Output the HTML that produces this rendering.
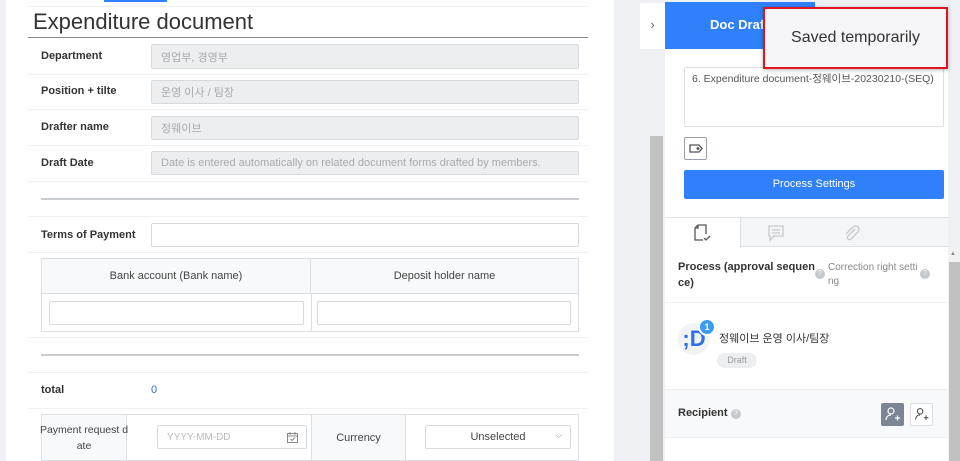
<!DOCTYPE html>
<html><head><meta charset="utf-8"><style>
*{margin:0;padding:0;box-sizing:border-box}
body{width:960px;height:461px;overflow:hidden;position:relative;background:#eef0f3;font-family:"Liberation Sans","Noto Sans CJK KR",sans-serif;color:#333}
.a{position:absolute}
.lbl{position:absolute;left:41px;font-size:11px;font-weight:bold;color:#333}
.inp{position:absolute;border:1px solid #d6d9dd;border-radius:2px;background:#fff;font-size:11px;color:#999;padding-left:9px;display:flex;align-items:center}
.dis{background:#eceef0}
.sep{position:absolute;left:28px;width:560px;height:1px;background:#f0f1f3}
.thick{position:absolute;left:41px;width:538px;height:2px;background:#c9ccd0}
.cell{position:absolute;font-size:11px;color:#444;display:flex;align-items:center;justify-content:center;text-align:center;line-height:16px;white-space:nowrap}
</style></head><body>
<div class="a" style="left:6px;top:0;width:608px;height:461px;background:#fff"></div>
<div class="a" style="left:104px;top:0;width:63px;height:2px;background:#2f80fa"></div>
<div class="a" style="left:28px;top:6px;width:560px;height:1px;background:#f0f1f3"></div>
<div class="a" style="left:33px;top:9px;font-size:22px;color:#333">Expenditure document</div>
<div class="a" style="left:28px;top:37px;width:560px;height:1px;background:#888"></div>

<div class="lbl" style="top:50px">Department</div>
<div class="inp dis" style="left:151px;top:44px;width:428px;height:25px;color:#aaa">영업부, 경영부</div>
<div class="sep" style="top:74px"></div>
<div class="lbl" style="top:85px">Position + tilte</div>
<div class="inp dis" style="left:151px;top:80px;width:428px;height:24px;color:#aaa">운영 이사 / 팀장</div>
<div class="sep" style="top:109px"></div>
<div class="lbl" style="top:121px">Drafter name</div>
<div class="inp dis" style="left:151px;top:116px;width:428px;height:24px;color:#aaa">정웨이브</div>
<div class="sep" style="top:145px"></div>
<div class="lbl" style="top:157px">Draft Date</div>
<div class="inp dis" style="left:151px;top:151px;width:428px;height:24px;color:#aaa">Date is entered automatically on related document forms drafted by members.</div>
<div class="sep" style="top:181px"></div>
<div class="thick" style="top:198px"></div>
<div class="sep" style="top:216px"></div>
<div class="lbl" style="top:229px">Terms of Payment</div>
<div class="inp" style="left:151px;top:223px;width:428px;height:24px"></div>
<div class="sep" style="top:252px"></div>

<div class="a" style="left:41px;top:258px;width:538px;height:74px;border:1px solid #dcdfe3"></div>
<div class="cell" style="left:42px;top:259px;width:269px;height:35px;background:#f8f9fa;border-right:1px solid #dcdfe3;border-bottom:1px solid #dcdfe3">Bank account (Bank name)</div>
<div class="cell" style="left:311px;top:259px;width:267px;height:35px;background:#f8f9fa;border-bottom:1px solid #dcdfe3">Deposit holder name</div>
<div class="a" style="left:311px;top:294px;width:1px;height:37px;background:#dcdfe3"></div>
<div class="inp" style="left:49px;top:301px;width:255px;height:24px"></div>
<div class="inp" style="left:317px;top:301px;width:254px;height:24px"></div>
<div class="sep" style="top:337px"></div>
<div class="thick" style="top:354px"></div>
<div class="sep" style="top:372px"></div>
<div class="lbl" style="top:384px">total</div>
<div class="a" style="left:151px;top:384px;font-size:11px;color:#2f6fd6">0</div>
<div class="sep" style="top:408px"></div>

<div class="a" style="left:41px;top:414px;width:538px;height:47px;border:1px solid #dcdfe3"></div>
<div class="cell" style="left:42px;top:415px;width:85px;height:45px;background:#f8f9fa;border-right:1px solid #dcdfe3;font-size:10.5px">Payment request d<br>ate</div>
<div class="inp" style="left:157px;top:425px;width:150px;height:24px;color:#bbb;font-size:10px">YYYY-MM-DD
<svg class="a" style="right:7px;top:5px" width="13" height="13" viewBox="0 0 13 13" fill="none" stroke="#888"><rect x="1.5" y="2.5" width="10" height="9"/><path d="M1.5 5h10M4 1v3M9 1v3M4.5 8l1.5 1.5 3-3"/></svg></div>
<div class="cell" style="left:311px;top:415px;width:95px;height:45px;background:#f8f9fa;border-left:1px solid #dcdfe3;border-right:1px solid #dcdfe3">Currency</div>
<div class="inp" style="left:425px;top:425px;width:146px;height:24px;justify-content:center;color:#444;padding:0">Unselected<span class="a" style="right:8px;top:4px;font-size:9px;color:#888">⌵</span></div>

<div class="a" style="left:650px;top:136px;width:13px;height:325px;background:#c1c1c1"></div>
<div class="a" style="left:640px;top:3px;width:25px;height:46px;background:#fff;color:#666;font-size:13px;text-align:center;line-height:44px">›</div>
<div class="a" style="left:665px;top:48px;width:283px;height:413px;background:#fff"></div>
<div class="a" style="left:665px;top:2px;width:150px;height:47px;background:#2f80fa;color:#fff;font-size:13px;font-weight:bold;padding:15px 0 0 45px">Doc Draft</div>
<div class="a" style="left:684px;top:67px;width:260px;height:60px;border:1px solid #dcdfe3;border-radius:2px;font-size:10.5px;color:#555;padding:4px 7px;line-height:14px;word-break:break-all">6. Expenditure document-정웨이브-20230210-(SEQ)</div>
<div class="a" style="left:684px;top:137px;width:23px;height:23px;border:1px solid #9aa0a8;border-radius:2px"><svg width="21" height="21" viewBox="0 0 21 21" fill="none" stroke="#555" stroke-width="1.3"><path d="M5 7h9l3 3.5-3 3.5H5z"/><circle cx="13" cy="10.5" r=".8"/></svg></div>
<div class="a" style="left:684px;top:170px;width:260px;height:29px;background:#2f80fa;border-radius:2px;color:#fff;font-size:11px;text-align:center;line-height:29px">Process Settings</div>
<div class="a" style="left:665px;top:217px;width:283px;height:30px;background:#f4f5f7;border-top:1px solid #dcdfe3;border-bottom:1px solid #dcdfe3"></div>
<div class="a" style="left:665px;top:217px;width:76px;height:31px;background:#fff;border-top:1px solid #dcdfe3;border-right:1px solid #dcdfe3"></div>
<svg class="a" style="left:692px;top:223px" width="20" height="20" viewBox="0 0 20 20" fill="none" stroke="#555" stroke-width="1.3"><path d="M6 2h8v9M6 2L3 5v12h8M3 5h3V2M12 15l2 2 4-4"/></svg>
<svg class="a" style="left:767px;top:224px" width="18" height="18" viewBox="0 0 18 18" fill="none" stroke="#c5c9ce" stroke-width="1.3"><path d="M2 2h14v10H7l-4 4V12H2zM5 6h8M5 9h8"/></svg>
<svg class="a" style="left:842px;top:224px" width="18" height="18" viewBox="0 0 18 18" fill="none" stroke="#c5c9ce" stroke-width="1.3"><path d="M13 5L6 12a2 2 0 0 0 3 3l7-7a3.5 3.5 0 0 0-5-5L4 10"/></svg>
<div class="a" style="left:678px;top:259px;font-size:11px;font-weight:bold;line-height:16px;white-space:nowrap">Process (approval sequen<br>ce)</div>
<div class="a" style="left:815px;top:269px;width:10px;height:10px;border-radius:50%;background:#c5c9ce;color:#fff;font-size:7px;text-align:center;line-height:10px">?</div>
<div class="a" style="left:828px;top:261px;font-size:10px;color:#888;line-height:14px;white-space:nowrap">Correction right setti<br>ng</div>
<div class="a" style="left:920px;top:269px;width:10px;height:10px;border-radius:50%;background:#c5c9ce;color:#fff;font-size:7px;text-align:center;line-height:10px">?</div>
<div class="a" style="left:665px;top:302px;width:283px;height:1px;background:#f0f1f3"></div>
<div class="a" style="left:678px;top:323px;width:32px;height:32px;border-radius:50%;background:#f2f3f5;color:#2f6fe8;font-weight:bold;font-size:22px;text-align:center;line-height:32px">;D</div>
<div class="a" style="left:698px;top:318px;width:18px;height:18px;border-radius:50%;background:#3b9cf5;border:2px solid #fff;color:#fff;font-size:9px;font-weight:bold;text-align:center;line-height:14px">1</div>
<div class="a" style="left:719px;top:330px;font-size:11px;color:#333">정웨이브 운영 이사/팀장</div>
<div class="a" style="left:717px;top:353px;width:40px;height:15px;border-radius:8px;background:#eceef0;color:#999;font-size:9px;text-align:center;line-height:15px">Draft</div>
<div class="a" style="left:665px;top:389px;width:283px;height:49px;background:#f8f9fa;border-top:1px solid #eceef0;border-bottom:1px solid #eceef0"></div>
<div class="a" style="left:678px;top:407px;font-size:11px;font-weight:bold">Recipient</div>
<div class="a" style="left:731px;top:409px;width:10px;height:10px;border-radius:50%;background:#c5c9ce;color:#fff;font-size:7px;text-align:center;line-height:10px">?</div>
<div class="a" style="left:881px;top:403px;width:23px;height:23px;background:#7b8594;border-radius:2px"><svg width="23" height="23" viewBox="0 0 23 23" fill="none" stroke="#fff" stroke-width="1.2"><circle cx="10" cy="8" r="3"/><path d="M5 17c0-3 2-5 5-5M14 15h5M16.5 12.5v5"/></svg></div>
<div class="a" style="left:910px;top:403px;width:23px;height:23px;background:#fff;border:1px solid #dcdfe3;border-radius:2px"><svg width="21" height="21" viewBox="0 0 23 23" fill="none" stroke="#555" stroke-width="1.2"><circle cx="10" cy="8" r="3"/><path d="M5 17c0-3 2-5 5-5M14 15h5M16.5 12.5v5"/></svg></div>
<div class="a" style="left:948px;top:248px;width:12px;height:213px;background:#f1f1f1"></div>
<div class="a" style="left:949px;top:262px;width:11px;height:199px;background:#c1c1c1"></div>
<div class="a" style="left:950px;top:251px;font-size:6px;color:#888">▲</div>
<div class="a" style="left:763px;top:7px;width:185px;height:62px;background:#f5f5f7;border:2px solid #e0141e;box-shadow:0 1px 4px rgba(0,0,0,.3);font-size:16px;color:#333;text-align:center;line-height:58px">Saved temporarily</div>
</body></html>
